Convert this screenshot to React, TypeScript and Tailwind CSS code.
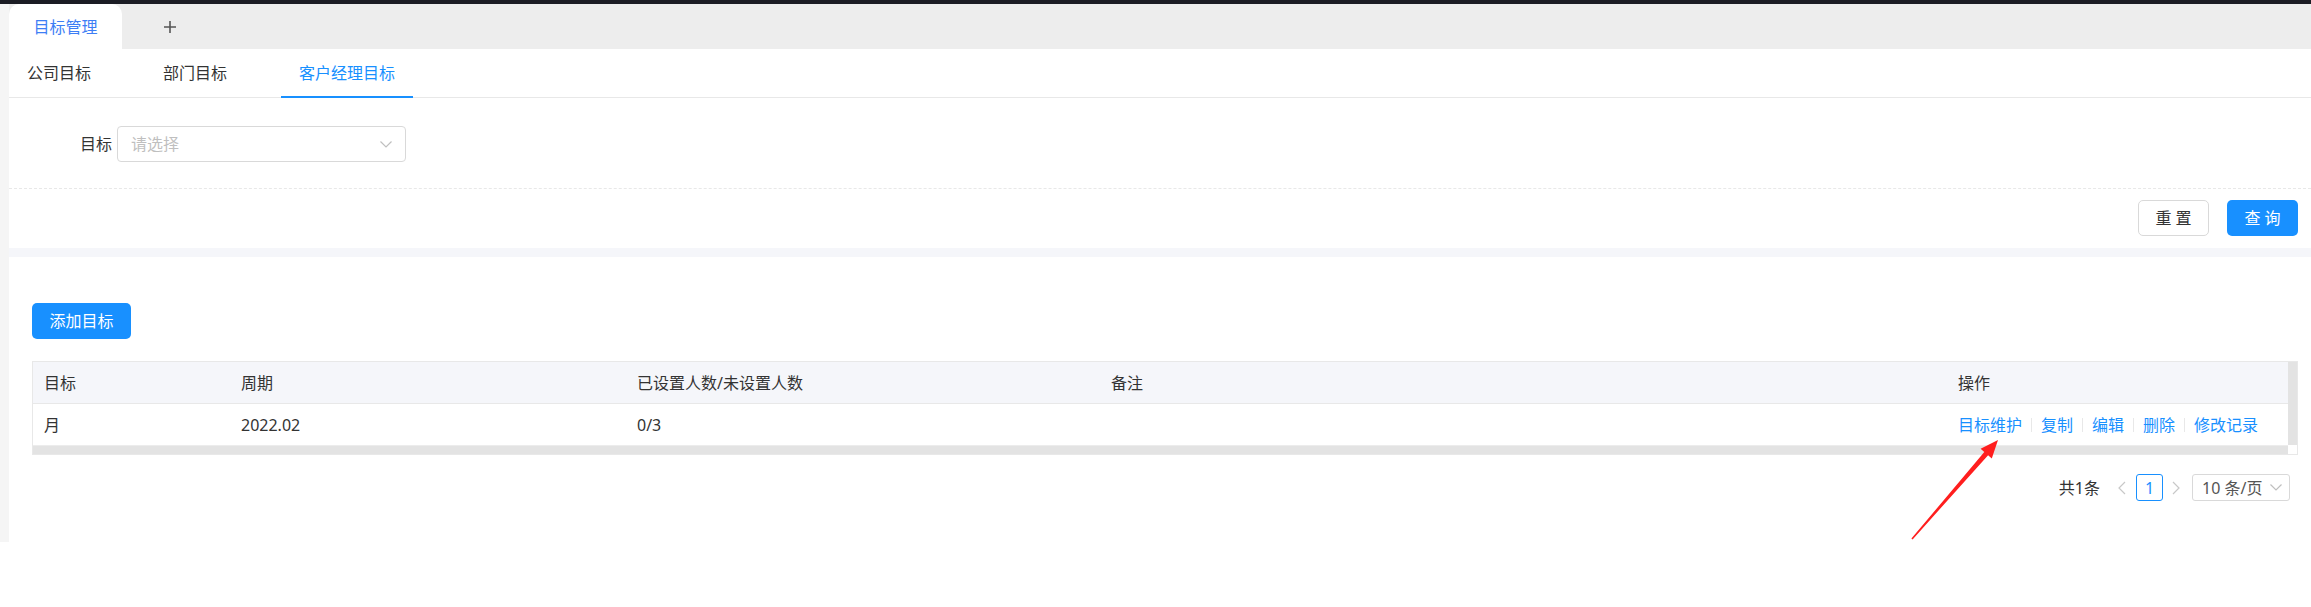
import React from 'react';

const ChevronDown = ({ className }: { className?: string }) => (
  <svg viewBox="0 0 12 7" className={className} fill="none" stroke="currentColor" strokeWidth="1.2">
    <path d="M0.5 0.5 L6 6 L11.5 0.5" />
  </svg>
);

const columns = ['目标', '周期', '已设置人数/未设置人数', '备注', '操作'];
const actions = ['目标维护', '复制', '编辑', '删除', '修改记录'];

const App = () => {
  return (
    <div
      className="relative w-[2311px] h-[607px] bg-white text-[16px] text-[#333]"
      style={{ fontFamily: '"Noto Sans", "Noto Sans CJK SC", sans-serif' }}
    >
      <div className="h-[4px] bg-[#1b1c24]" />

      <div className="flex h-[538px]">
        <div className="w-[9px] bg-[#f5f5f5]" />

        <div className="flex-1 flex flex-col">
          {/* top page tabs */}
          <div className="h-[45px] bg-[#ededed] flex items-stretch">
            <div className="w-[113px] bg-white rounded-t-[10px] flex items-center justify-center text-[#3d7ef5]">
              目标管理
            </div>
            <div className="w-[95px] flex items-center justify-center text-[#555]">
              <svg viewBox="0 0 12 12" className="w-[12px] h-[12px]" stroke="currentColor" strokeWidth="1.6">
                <path d="M6 0 V12 M0 6 H12" />
              </svg>
            </div>
          </div>

          {/* sub tabs */}
          <div className="h-[49px] border-b border-[#e8e8e8] flex gap-[36px]">
            <div className="px-[18px] flex items-center">公司目标</div>
            <div className="px-[18px] flex items-center">部门目标</div>
            <div className="relative px-[18px] flex items-center text-[#1890ff]">
              客户经理目标
              <div className="absolute left-0 right-0 -bottom-[1px] h-[2px] bg-[#1890ff]" />
            </div>
          </div>

          {/* filter */}
          <div className="h-[150px] flex flex-col">
            <div className="pt-[28px] pl-[71px] flex items-center">
              <span className="mr-[5px]">目标</span>
              <div className="w-[289px] h-[36px] border border-[#d9d9d9] rounded-[4px] flex items-center justify-between pl-[13px] pr-[13px]">
                <span className="text-[#bfbfbf]">请选择</span>
                <ChevronDown className="w-[12px] h-[7px] text-[#bfbfbf]" />
              </div>
            </div>
            <div className="mt-[26px] border-t border-dashed border-[#e8e8e8]" />
            <div className="mt-[11px] pr-[13px] flex justify-end gap-[18px]">
              <button className="w-[71px] h-[36px] border border-[#d9d9d9] rounded-[5px] bg-white text-[#333]">
                重 置
              </button>
              <button className="w-[71px] h-[36px] rounded-[5px] bg-[#1890ff] text-white">查 询</button>
            </div>
          </div>

          <div className="h-[9px] bg-[#f5f6fa]" />

          {/* list */}
          <div className="flex-1 pl-[23px] pr-[13px] pt-[46px]">
            <button className="w-[99px] h-[36px] rounded-[5px] bg-[#1890ff] text-white">添加目标</button>

            <div className="mt-[22px] border border-[#e8e8e8] flex">
              <div className="flex-1">
                <div className="h-[42px] bg-[#f5f6fa] border-b border-[#e8e8e8] grid grid-cols-[197px_396px_474px_847px_1fr] items-center">
                  {columns.map((c) => (
                    <div key={c} className="px-[11px]">
                      {c}
                    </div>
                  ))}
                </div>
                <div className="h-[41px] grid grid-cols-[197px_396px_474px_847px_1fr] items-center">
                  <div className="px-[11px]">月</div>
                  <div className="px-[11px]">2022.02</div>
                  <div className="px-[11px]">0/3</div>
                  <div className="px-[11px]" />
                  <div className="px-[11px] flex items-center text-[#1890ff]">
                    {actions.map((a, i) => (
                      <React.Fragment key={a}>
                        {i > 0 && <span className="mx-[9px] w-px h-[14px] bg-[#e8e8e8]" />}
                        <span>{a}</span>
                      </React.Fragment>
                    ))}
                  </div>
                </div>
                <div className="h-[9px] bg-[#e3e3e3] border-t border-[#ececec]" />
              </div>
              <div className="w-[9px] flex flex-col">
                <div className="h-[83px] bg-[#e3e3e3]" />
                <div className="flex-1 bg-white" />
              </div>
            </div>

            <div className="mt-[19px] pr-[8px] flex justify-end items-center">
              <span>共1条</span>
              <span className="ml-[18px] text-[#c8c8c8]">
                <svg viewBox="0 0 8 14" className="w-[8px] h-[14px]" fill="none" stroke="currentColor" strokeWidth="1.2">
                  <path d="M7 1 L1 7 L7 13" />
                </svg>
              </span>
              <span className="ml-[10px] w-[27px] h-[27px] border border-[#1890ff] rounded-[3px] text-[#1890ff] flex items-center justify-center">
                1
              </span>
              <span className="ml-[9px] text-[#c8c8c8]">
                <svg viewBox="0 0 8 14" className="w-[8px] h-[14px]" fill="none" stroke="currentColor" strokeWidth="1.2">
                  <path d="M1 1 L7 7 L1 13" />
                </svg>
              </span>
              <div className="ml-[12px] w-[98px] h-[27px] border border-[#d9d9d9] rounded-[3px] flex items-center justify-between pl-[9px] pr-[7px] text-[#555]">
                <span>10 条/页</span>
                <ChevronDown className="w-[12px] h-[7px] text-[#bfbfbf]" />
              </div>
            </div>
          </div>
        </div>
      </div>

      {/* annotation arrow */}
      <svg className="absolute left-0 top-0 pointer-events-none" width="2311" height="607">
        <polygon
          points="1912.6,539.4 1988.1,455.2 1991.8,458.5 1998,440 1980.6,448.7 1984.3,452.0 1911.4,538.6"
          fill="#ff1e1e"
        />
      </svg>
    </div>
  );
};

export default App;
